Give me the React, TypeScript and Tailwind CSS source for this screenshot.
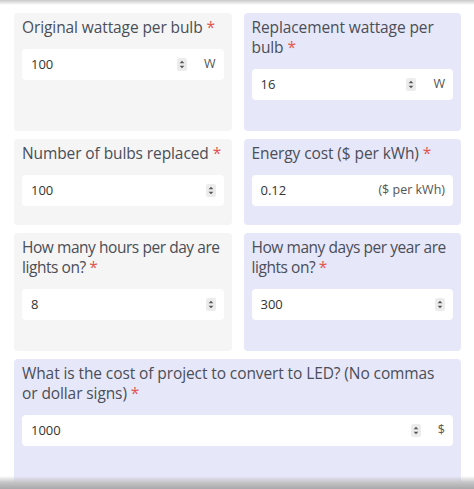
import React from 'react';

const Spinner: React.FC = () => (
  <svg width="10" height="13" viewBox="0 0 10 13" className="shrink-0">
    <rect x="0" y="0" width="10" height="13" rx="2" fill="#ececec" />
    <path d="M2.6 5.3 L5 2.8 L7.4 5.3 Z" fill="#555" />
    <path d="M2.6 7.7 L5 10.2 L7.4 7.7 Z" fill="#555" />
  </svg>
);

interface FieldProps {
  label: string;
  value: string;
  unit?: string;
  spinner?: boolean;
  tint: 'gray' | 'blue';
  pad: string;
  wide?: boolean;
  tight?: boolean;
}

const Field: React.FC<FieldProps> = ({ label, value, unit, spinner = true, tint, pad, wide, tight }) => (
  <div
    className={`rounded-[4px] px-2 pt-[4px] ${pad} ${tint === 'gray' ? 'bg-[#f5f5f6]' : 'bg-[#e7e7fa]'} ${wide ? 'col-span-2' : ''}`}
  >
    <label
      className={`block text-[15.5px] leading-[20px] text-[#4a4e57] ${tight ? 'tracking-[-0.45px]' : 'tracking-[-0.1px]'}`}
    >
      {label} <span className="text-[#e2574c]">*</span>
    </label>
    <div className="mt-3 flex h-[31px] items-center rounded-[4px] bg-white pl-[9px] pr-[8px] text-[13px] text-[#333]">
      <span className="flex-1">{value}</span>
      {spinner && <Spinner />}
      {unit && <span className={`${spinner ? 'ml-[17px]' : ''} text-[12.5px] text-[#555]`}>{unit}</span>}
    </div>
  </div>
);

export default function App() {
  return (
    <div
      className="relative h-[489px] w-[474px] overflow-hidden bg-white"
      style={{ fontFamily: '"Open Sans", "Noto Sans", sans-serif' }}
    >
      <div className="grid grid-cols-2 gap-x-3 gap-y-2 pl-[14px] pr-[13px] pt-[13px]">
        <Field tint="gray" pad="pb-[31px]" label="Original wattage per bulb" value="100" unit="W" />
        <Field tint="blue" pad="pb-[31px]" label="Replacement wattage per bulb" value="16" unit="W" />
        <Field tint="gray" pad="pb-[19px]" label="Number of bulbs replaced" value="100" />
        <Field tint="blue" pad="pb-[19px]" label="Energy cost ($ per kWh)" value="0.12" unit="($ per kWh)" spinner={false} />
        <Field tint="gray" pad="pb-[31px]" tight label="How many hours per day are lights on?" value="8" />
        <Field tint="blue" pad="pb-[31px]" tight label="How many days per year are lights on?" value="300" />
        <Field
          tint="blue"
          pad="pb-[40px]"
          wide
          label="What is the cost of project to convert to LED? (No commas or dollar signs)"
          value="1000"
          unit="$"
        />
      </div>
      <div className="pointer-events-none absolute left-0 right-0 top-0 h-[5px] bg-gradient-to-b from-[#c9c9c9] to-transparent" />
      <div className="pointer-events-none absolute bottom-0 left-0 right-0 h-[13px] bg-gradient-to-b from-transparent via-[#c4c4c6] to-[#a9a9ab]" />
    </div>
  );
}
